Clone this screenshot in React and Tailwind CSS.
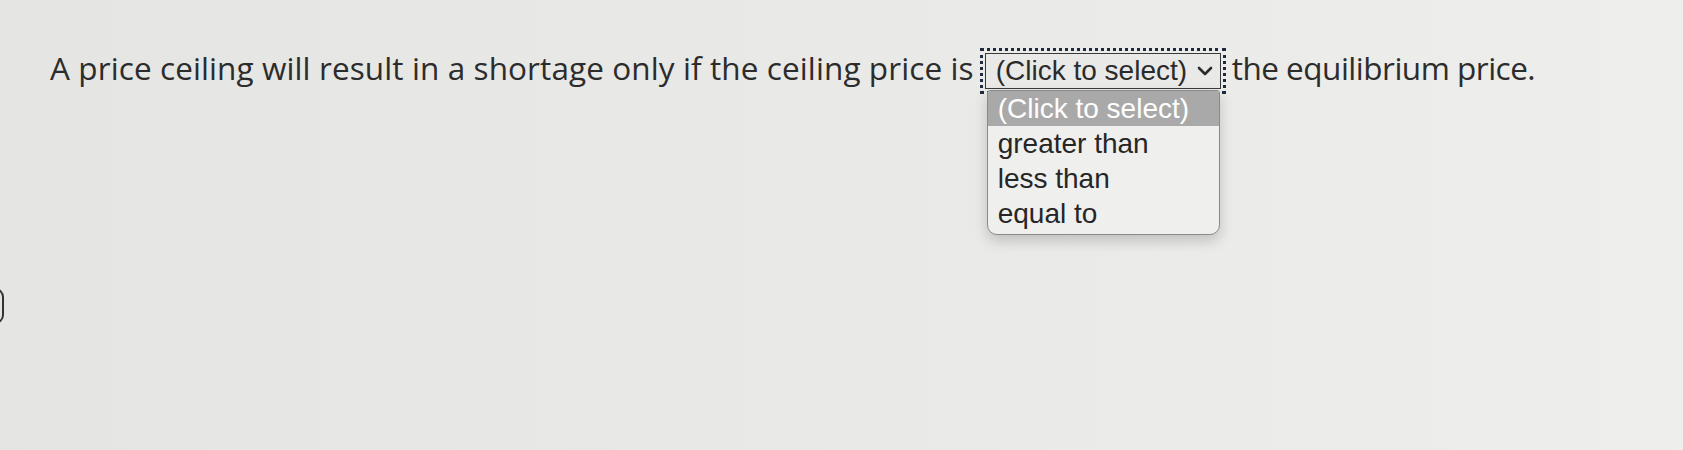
import React from "react";

const options = ["greater than", "less than", "equal to"];

const Chevron = () => (
  <svg
    viewBox="0 0 18 12"
    className="ml-auto h-[12px] w-[18px]"
    fill="none"
    stroke="#2b2b2b"
    strokeWidth="2.6"
    strokeLinecap="round"
    strokeLinejoin="round"
  >
    <path d="M3 3l6 6 6-6" />
  </svg>
);

export default function App() {
  return (
    <div className="relative min-h-[450px] w-full overflow-hidden bg-gradient-to-r from-[#e5e5e3] via-[#e9e9e7] to-[#eeeeec]">
      {/* question sentence with inline select */}
      <div
        className="flex items-baseline pl-[50px] pt-[44px] text-[31.5px] text-[#2c2c2c]"
        style={{ fontFamily: '"Open Sans", sans-serif' }}
      >
        <span className="whitespace-nowrap tracking-[0.1px]">
          A price ceiling will result in a shortage only if the ceiling price is
        </span>
        <span className="relative ml-[6px] mr-[6px] inline-block border-[3px] border-dotted border-[#1e2a40] p-[2px]">
          <span
            className="flex h-[36px] w-[236px] items-center border border-[#3a3a3a] bg-[#e9e9e8] pl-[10px] pr-[6px] text-[28px] text-[#2b2b2b]"
            style={{ fontFamily: '"Liberation Sans", Arial, sans-serif' }}
          >
            (Click to select)
            <Chevron />
          </span>
          <ul
            className="absolute left-[4px] top-full mt-[-1px] w-[233px] overflow-hidden rounded-b-[10px] rounded-t-[3px] border border-[#8a8a8a] bg-[#efefee] text-[28px] leading-[35px] text-[#262626] shadow-[0_6px_14px_rgba(0,0,0,0.18)]"
            style={{ fontFamily: '"Liberation Sans", Arial, sans-serif' }}
          >
            <li className="bg-[#a9a9a9] pl-[10px] text-white">(Click to select)</li>
            {options.map((o) => (
              <li key={o} className="pl-[10px]">
                {o}
              </li>
            ))}
            <li className="h-[3px]" />
          </ul>
        </span>
        <span className="whitespace-nowrap tracking-[-0.5px]">the equilibrium price.</span>
      </div>
      {/* dark edge at the left of the frame */}
      <div className="absolute left-[-14px] top-[288px] h-[36px] w-[18px] rounded-full border-2 border-[#333]" />
    </div>
  );
}
